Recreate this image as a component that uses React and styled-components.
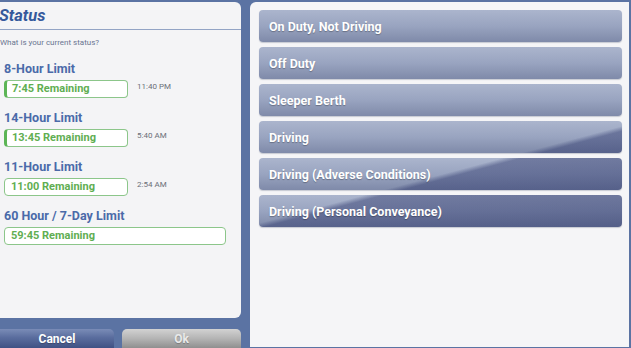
import React from "react";
import styled, { createGlobalStyle } from "styled-components";

const GlobalStyle = createGlobalStyle`
  html, body {
    margin: 0;
    padding: 0;
    background: #5b73a3;
    width: 631px;
    height: 348px;
    overflow: hidden;
    font-family: Roboto, "Liberation Sans", Arial, sans-serif;
  }
  * { box-sizing: border-box; }
`;

const Screen = styled.div`
  display: grid;
  grid-template-columns: 241px 379px;
  column-gap: 9px;
  padding-top: 2px;
  height: 348px;
  overflow: hidden;
`;

const LeftColumn = styled.div`
  display: flex;
  flex-direction: column;
  gap: 11px;
`;

const LeftPanel = styled.section`
  height: 316px;
  background: #f4f4f6;
  border-radius: 0 6px 6px 0;
  overflow: hidden;
`;

const Header = styled.header`
  height: 28px;
  border-bottom: 1px solid #93a4c5;
`;

const Title = styled.h1`
  margin: 0 0 0 -1px;
  font-size: 16.5px;
  line-height: 27px;
  font-weight: 700;
  font-style: italic;
  color: #35599c;
`;

const Prompt = styled.p`
  margin: 8px 0 0 0;
  font-size: 8px;
  line-height: 10px;
  color: #6a7591;
`;

const Limits = styled.div`
  margin-top: 13px;
  padding-left: 4px;
  display: flex;
  flex-direction: column;
  gap: 12px;
`;

const Limit = styled.div`
  display: flex;
  flex-direction: column;
  gap: 4px;
`;

const LimitName = styled.h2`
  margin: 0;
  font-size: 12.5px;
  line-height: 15px;
  font-weight: 700;
  color: #4a6aa9;
`;

const LimitRow = styled.div`
  display: flex;
  align-items: flex-start;
  gap: 9px;
`;

const Remaining = styled.div`
  width: ${(p) => p.$width}px;
  height: 18px;
  background: #ffffff;
  border: 1px solid #8cc68a;
  border-left: ${(p) => (p.$active ? "3px solid #5cb556" : "1px solid #8cc68a")};
  border-radius: 4px;
  padding-left: ${(p) => (p.$active ? "5px" : "6px")};
  font-size: 11px;
  line-height: 16px;
  font-weight: 700;
  color: #5fae52;
`;

const TimeLabel = styled.span`
  font-size: 8px;
  line-height: 14px;
  color: #6b6f78;
`;

const ActionRow = styled.div`
  display: flex;
  gap: 8px;
  height: 19px;
`;

const ActionButton = styled.button`
  border: none;
  margin: 0;
  padding: 0;
  height: 100%;
  width: ${(p) => p.$width}px;
  border-radius: ${(p) => (p.$primary ? "0 5px 0 0" : "5px 5px 0 0")};
  background: ${(p) =>
    p.$primary
      ? "linear-gradient(to bottom, #7a8cb7 0%, #5a6d9e 45%, #3f5184 100%)"
      : "linear-gradient(to bottom, #d2d2d2 0%, #b4b4b4 50%, #8f8f8f 100%)"};
  color: ${(p) => (p.$primary ? "#ffffff" : "#e9e9e9")};
  font-family: Roboto, "Liberation Sans", Arial, sans-serif;
  font-size: 12px;
  font-weight: 700;
  line-height: 18px;
  text-align: center;
  text-shadow: 0 1px 1px rgba(0, 0, 0, 0.25);
`;

const RightPanel = styled.section`
  height: 345px;
  background: #f5f5f7;
  border-radius: 6px 0 0 0;
  padding: 8px 7px 0 9px;
  display: flex;
  flex-direction: column;
  gap: 5px;
`;

const StatusButton = styled.button`
  height: 32px;
  width: 100%;
  border: none;
  margin: 0;
  border-radius: 4px;
  padding: 0 0 0 10px;
  text-align: left;
  font-family: Roboto, "Liberation Sans", Arial, sans-serif;
  font-size: 12.5px;
  font-weight: 700;
  color: #ffffff;
  text-shadow: 0 1px 1px rgba(0, 0, 0, 0.28);
  box-shadow: 0 1px 1px rgba(60, 70, 100, 0.25);
  background:
    linear-gradient(165deg, rgba(35, 45, 100, 0) 0%, rgba(35, 45, 100, 0) 56.6%, rgba(35, 45, 100, 0.42) 57.6%, rgba(30, 40, 92, 0.5) 100%) fixed,
    linear-gradient(to bottom, #abb5cd 0%, #99a4c0 50%, #7f8aa9 100%) scroll;
`;

const limits = [
  { name: "8-Hour Limit", remaining: "7:45 Remaining", time: "11:40 PM", active: true, width: 124 },
  { name: "14-Hour Limit", remaining: "13:45 Remaining", time: "5:40 AM", active: true, width: 124 },
  { name: "11-Hour Limit", remaining: "11:00 Remaining", time: "2:54 AM", active: false, width: 124 },
  { name: "60 Hour / 7-Day Limit", remaining: "59:45 Remaining", time: null, active: false, width: 222 },
];

const statuses = [
  "On Duty, Not Driving",
  "Off Duty",
  "Sleeper Berth",
  "Driving",
  "Driving (Adverse Conditions)",
  "Driving (Personal Conveyance)",
];

export default function App() {
  return (
    <>
      <GlobalStyle />
      <Screen>
        <LeftColumn>
          <LeftPanel>
            <Header>
              <Title>Status</Title>
            </Header>
            <Prompt>What is your current status?</Prompt>
            <Limits>
              {limits.map((l) => (
                <Limit key={l.name}>
                  <LimitName>{l.name}</LimitName>
                  <LimitRow>
                    <Remaining $active={l.active} $width={l.width}>
                      {l.remaining}
                    </Remaining>
                    {l.time && <TimeLabel>{l.time}</TimeLabel>}
                  </LimitRow>
                </Limit>
              ))}
            </Limits>
          </LeftPanel>
          <ActionRow>
            <ActionButton $primary $width={114}>Cancel</ActionButton>
            <ActionButton $width={119}>Ok</ActionButton>
          </ActionRow>
        </LeftColumn>
        <RightPanel>
          {statuses.map((s) => (
            <StatusButton key={s}>{s}</StatusButton>
          ))}
        </RightPanel>
      </Screen>
    </>
  );
}
